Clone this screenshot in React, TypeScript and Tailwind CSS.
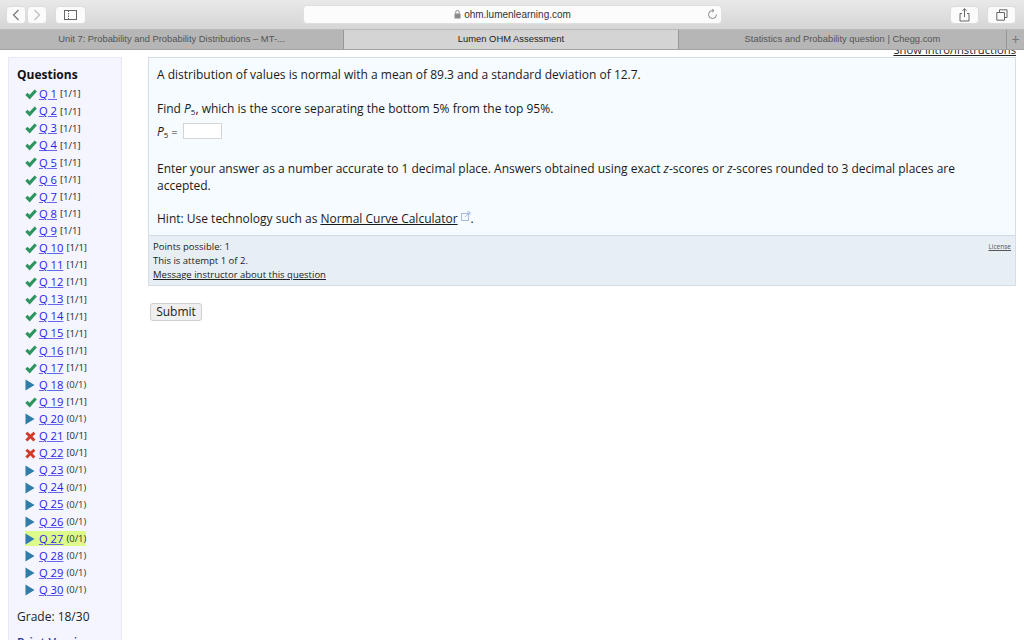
const font = { fontFamily: '"Open Sans", sans-serif' };
const uiFont = { fontFamily: '"Liberation Sans", sans-serif' };

type Status = 'ok' | 'todo' | 'bad';
const st: Record<number, Status> = { 18: 'todo', 19: 'ok', 20: 'todo', 21: 'bad', 22: 'bad' };
const questions = Array.from({ length: 30 }, (_, i) => {
  const n = i + 1;
  const status: Status = st[n] ?? (n <= 17 ? 'ok' : 'todo');
  const score = status === 'ok' ? '[1/1]' : status === 'bad' ? '[0/1]' : '(0/1)';
  return { n, status, score };
});

function Mark({ status }: { status: Status }) {
  if (status === 'ok')
    return (
      <svg width="12" height="11" viewBox="0 0 12 11" className="shrink-0">
        <path d="M0.3 6 L2.4 3.8 L4.6 5.8 L9.6 0.4 L11.9 2.4 L4.7 10.4 Z" fill="#2f9560" />
      </svg>
    );
  if (status === 'bad')
    return (
      <svg width="11" height="11" viewBox="0 0 11 11" className="shrink-0">
        <path d="M2.4 0.8 L5.4 3.6 L8.4 0.8 L10.4 2.8 L7.5 5.6 L10.4 8.4 L8.4 10.4 L5.4 7.6 L2.4 10.4 L0.4 8.4 L3.3 5.6 L0.4 2.8 Z" fill="#d03a2c" />
      </svg>
    );
  return (
    <svg width="10" height="12" viewBox="0 0 10 12" className="shrink-0">
      <path d="M0.5 0.5 L9.5 6 L0.5 11.5 Z" fill="#2f7da8" />
    </svg>
  );
}

function ToolButton({ children, className }: { children: React.ReactNode; className: string }) {
  return (
    <div className={`h-[18px] bg-[#fbfbfb] border border-[#dcdcdc] rounded-[4px] flex items-center justify-center shrink-0 ${className}`}>
      {children}
    </div>
  );
}

export default function App() {
  return (
    <div className="h-[640px] w-[1024px] overflow-hidden bg-white flex flex-col text-black" style={font}>
      <div className="relative z-10 h-[30px] shrink-0 bg-gradient-to-b from-[#e9e9e9] to-[#d5d5d5] flex items-center pl-[6px] pr-[8px] border-b border-[#b9b9b9]">
        <ToolButton className="w-[20px]">
          <svg width="8" height="12" viewBox="0 0 8 12"><path d="M6.5 1 L1.5 6 L6.5 11" fill="none" stroke="#777" strokeWidth="1.2" /></svg>
        </ToolButton>
        <ToolButton className="w-[20px] ml-[1px]">
          <svg width="8" height="12" viewBox="0 0 8 12"><path d="M1.5 1 L6.5 6 L1.5 11" fill="none" stroke="#bbb" strokeWidth="1.2" /></svg>
        </ToolButton>
        <ToolButton className="w-[31px] ml-[8px]">
          <svg width="13" height="10" viewBox="0 0 13 10"><rect x="0.5" y="0.5" width="12" height="9" fill="none" stroke="#666" /><path d="M4.5 0.5 V9.5" stroke="#666" strokeDasharray="1.5 1" /></svg>
        </ToolButton>
        <div className="ml-[217px] w-[419px] h-[19px] shrink-0 bg-[#fcfcfc] border border-[#dfdfdf] rounded-[4px] flex items-center justify-center gap-[3px] relative">
          <svg width="7" height="9" viewBox="0 0 7 9"><rect x="0.5" y="3.5" width="6" height="5" fill="#8a8a8a" /><path d="M1.7 3.5 V2.2 a1.8 1.8 0 0 1 3.6 0 V3.5" fill="none" stroke="#8a8a8a" /></svg>
          <span className="text-[10px] text-[#333]" style={uiFont}>ohm.lumenlearning.com</span>
          <svg className="absolute right-[3px] top-[3px]" width="11" height="11" viewBox="0 0 11 11"><path d="M5.5 1.5 A4 4 0 1 0 9.5 5.5 M5 0 L7 1.6 L5 3" fill="none" stroke="#777" strokeWidth="0.9" /></svg>
        </div>
        <div className="flex-1" />
        <ToolButton className="w-[29px]">
          <svg width="11" height="14" viewBox="0 0 11 14"><path d="M3 5.5 H1 V13 H10 V5.5 H8 M5.5 9 V0.8 M3.4 2.8 L5.5 0.8 L7.6 2.8" fill="none" stroke="#666" /></svg>
        </ToolButton>
        <ToolButton className="w-[29px] ml-[8px]">
          <svg width="12" height="12" viewBox="0 0 12 12"><path d="M3.5 3 V0.8 H11 V8.5 H8.5 M0.8 3.5 H8.5 V11.2 H0.8 Z" fill="none" stroke="#666" /></svg>
        </ToolButton>
      </div>

      <div className="relative z-10 h-[20px] shrink-0 bg-[#b6b6b6] border-b border-[#a3a3a3] flex text-[9.4px]" style={uiFont}>
        <div className="w-[344px] flex items-center justify-center text-[#555] border-r border-[#979797]">Unit 7: Probability and Probability Distributions – MT-...</div>
        <div className="w-[335px] flex items-center justify-center text-[#222] bg-[#d4d4d4] border-r border-[#979797]">Lumen OHM Assessment</div>
        <div className="w-[328px] flex items-center justify-center text-[#555] border-r border-[#979797]">Statistics and Probability question | Chegg.com</div>
        <div className="flex-1 flex items-center justify-center text-[#777] text-[14px] font-light">+</div>
      </div>

      <div className="flex-1 min-h-0 overflow-hidden relative">
        <div className="h-[7px] flex justify-end pr-[8px]">
          <a className="underline text-[11.25px] leading-[14px] -mt-[7px] text-[#222] shrink-0">Show intro/instructions</a>
        </div>
        <div className="flex items-start pl-[8px]">
          <div className="w-[114px] h-[700px] shrink-0 bg-[#f4f5fe] border border-[#e6e8f8] pl-[8px] pt-[8px]">
            <div className="text-[12px] leading-[18px] font-bold text-[#111] mb-[2px]">Questions</div>
            <ul>
              {questions.map((q) => (
                <li key={q.n} className="h-[17.1px] flex items-center pl-[8px]">
                  <div className={`flex items-center h-[15px] ${q.n === 27 ? 'bg-[#dcfb8a]' : ''}`}>
                    <span className="w-[14px] shrink-0 flex"><Mark status={q.status} /></span>
                    <a className="text-[11.2px] text-[#2a22f0] underline decoration-[#6a64e8] whitespace-pre">{'Q ' + q.n}</a>
                    <span className={`text-[9.5px] ml-[3px] ${q.status === 'todo' ? 'text-[#333]' : 'text-[#222]'}`}>{q.score}</span>
                  </div>
                </li>
              ))}
            </ul>
            <div className="text-[12px] leading-[16px] text-[#222] mt-[10px]">Grade: 18/30</div>
            <div className="text-[12px] leading-[16px] text-[#2a3a9a] font-semibold mt-[10px]">Print Version</div>
          </div>

          <div className="ml-[26px] w-[868px] shrink-0">
            <div className="border border-[#d5dde6] bg-[#f6fbff]">
              <div className="px-[8px] pt-[8px] text-[12px] leading-[17px] text-[#1a1a1a] h-[177px]">
                <p>A distribution of values is normal with a mean of 89.3 and a standard deviation of 12.7.</p>
                <p className="mt-[16.5px]">Find <i>P</i><sub className="text-[8px] leading-none">5</sub>, which is the score separating the bottom 5% from the top 95%.</p>
                <div className="flex items-center h-[17px] mt-[6px]">
                  <span className="text-[11px]"><i className="text-[12px]">P</i><sub className="text-[8px] leading-none">5</sub> =</span>
                  <span className="ml-[5px] w-[39px] h-[16px] bg-white border border-[#d4d4d4] block" />
                </div>
                <p className="mt-[20px]">Enter your answer as a number accurate to 1 decimal place. Answers obtained using exact <i>z</i>-scores or <i>z</i>-scores rounded to 3 decimal places are accepted.</p>
                <p className="mt-[16px] flex items-center">
                  <span>Hint: Use technology such as </span>
                  <a className="underline ml-[3px]">Normal Curve Calculator</a>
                  <svg className="ml-[3px] -mt-[4px]" width="10" height="10" viewBox="0 0 10 10"><rect x="0.5" y="2.5" width="7" height="7" fill="none" stroke="#a9bbdf" /><path d="M4 6 L9 1 M6 1 H9 V4" fill="none" stroke="#a9bbdf" /></svg>
                  <span>.</span>
                </p>
              </div>
              <div className="border-t border-[#cfdbe4] bg-[#e7eff5] h-[50px] px-[4px] pt-[4px] text-[9.5px] leading-[14px] text-[#222] flex justify-between">
                <div>
                  <div>Points possible: 1</div>
                  <div>This is attempt 1 of 2.</div>
                  <a className="underline">Message instructor about this question</a>
                </div>
                <a className="underline text-[6.5px] leading-[14px] text-[#555]">License</a>
              </div>
            </div>
            <button className="mt-[17px] ml-[2px] h-[18px] w-[52px] bg-[#efefef] border border-[#cfcfcf] rounded-[3px] text-[12px] leading-none text-[#222] flex items-center justify-center">Submit</button>
          </div>
        </div>
      </div>
    </div>
  );
}
